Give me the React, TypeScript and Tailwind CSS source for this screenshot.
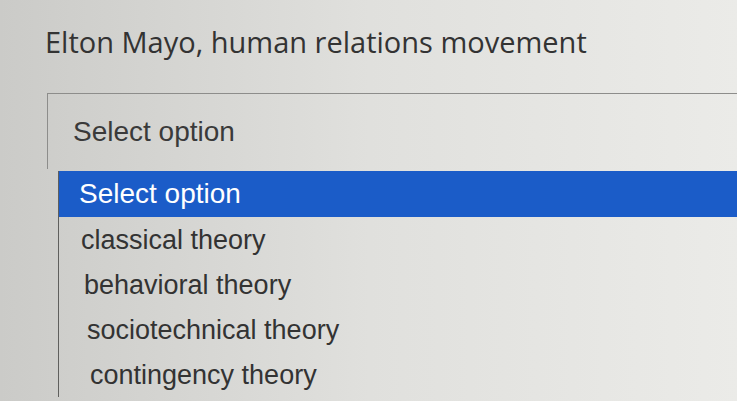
const options = [
  { label: "classical theory", pad: "pl-[22px]" },
  { label: "behavioral theory", pad: "pl-[25px]" },
  { label: "sociotechnical theory", pad: "pl-[28px]" },
  { label: "contingency theory", pad: "pl-[31px]" },
];

export default function App() {
  return (
    <div className="w-[737px] h-[401px] overflow-hidden bg-linear-to-r from-[#cbcbc8] via-[#e0e0dd] to-[#ebebe8]">
      {/* Question */}
      <div className="pt-[27px] pl-[45px]">
        <h1 className="font-['Open_Sans',sans-serif] text-[29px] leading-[29px] text-[#333333] font-normal">
          Elton Mayo, human relations movement
        </h1>
      </div>

      {/* Select box */}
      <div className="mt-[37px] ml-[47px] h-[76px] border-t border-l border-[#8d8d8b] font-['Liberation_Sans',Arial,sans-serif]">
        <p className="pl-[25px] text-[28px] leading-[75px] text-[#3a3a3a]">
          Select option
        </p>
      </div>

      {/* Dropdown list */}
      <div className="mt-[2px] ml-[58px] border-l border-[#5f5f5d] font-['Liberation_Sans',Arial,sans-serif]">
        <div className="h-[46px] bg-[#1b5cc8] pl-[20px] text-[28px] leading-[46px] text-white">
          Select option
        </div>
        {options.map((o) => (
          <div
            key={o.label}
            className={`h-[45px] ${o.pad} text-[27px] leading-[46px] text-[#333333]`}
          >
            {o.label}
          </div>
        ))}
      </div>
    </div>
  );
}
